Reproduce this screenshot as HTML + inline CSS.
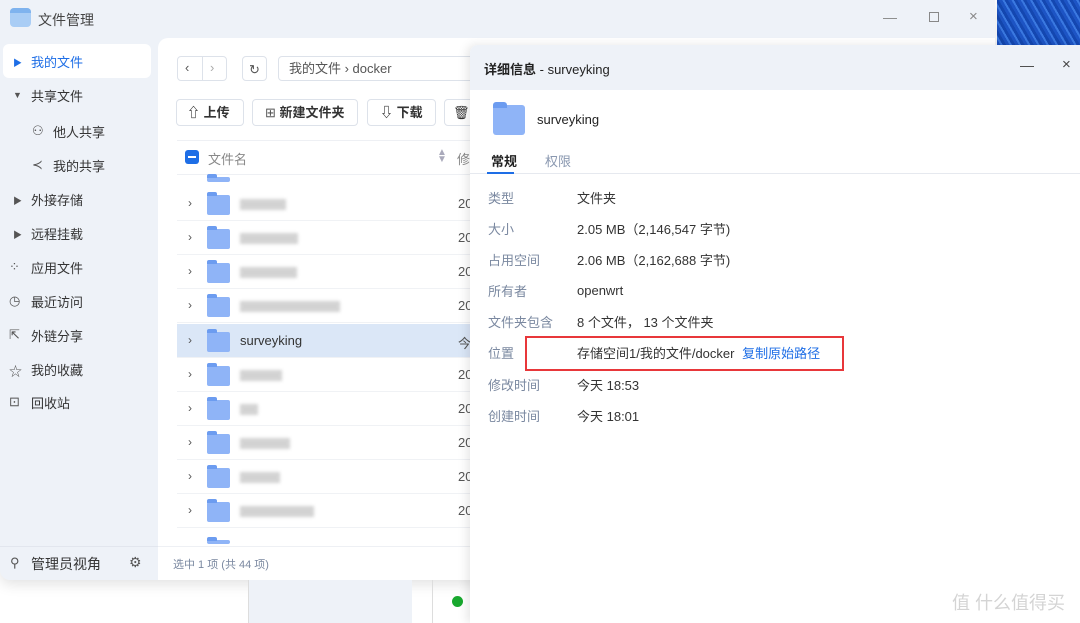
<!DOCTYPE html>
<html><head><meta charset="utf-8"><style>
*{margin:0;padding:0;box-sizing:border-box}
body{width:1080px;height:623px;overflow:hidden;background:#fff;position:relative;font-family:"Liberation Sans","Noto Sans CJK SC",sans-serif;font-size:13px;color:#333}
.a{position:absolute;white-space:nowrap}
.win{position:absolute;left:0;top:0;width:995px;height:580px;background:#eef2f8;border-radius:0 0 10px 10px;box-shadow:0 4px 14px rgba(0,0,0,.12)}
.side{color:#333;font-size:13px}
.ic{color:#555;font-size:13px}
.content{position:absolute;left:158px;top:38px;width:837px;height:542px;background:#fff;border-radius:10px 0 0 0}
.btn{position:absolute;border:1px solid #dde2ea;border-radius:4px;background:#fff;height:27px;font-size:13px;font-weight:bold;color:#333;line-height:25px}
.row{position:absolute;left:177px;width:293px;height:34px;border-bottom:1px solid #f0f2f5}
.fold{position:absolute;width:23px;height:20px;background:#8fb4f7;border-radius:2px}
.fold:before{content:"";position:absolute;left:0;top:-3px;width:10px;height:4px;background:#6c9cf0;border-radius:2px 2px 0 0}
.blur{position:absolute;height:11px;background:#c8c8c8;filter:blur(1.5px);opacity:.8}
.chev{position:absolute;left:11px;top:9px;color:#555;font-size:12px}
.dlg{position:absolute;left:470px;top:45px;width:610px;height:578px;background:#fff;box-shadow:-3px 0 10px rgba(0,0,0,.1);border-radius:8px 0 0 0;overflow:hidden}
.lab{position:absolute;left:18px;color:#7a88a0;font-size:13px}
.val{position:absolute;left:107px;color:#333;font-size:13px}
</style></head><body>
<div class="a" style="left:997px;top:0;width:83px;height:45px;background:repeating-linear-gradient(60deg,#1d54c4 0 3px,#3a78e0 3px 5px,#1447b0 5px 8px)"></div>
<div class="win">
 <div class="a" style="left:10px;top:8px;width:21px;height:19px;background:#a9cdf5;border-radius:4px"></div>
 <div class="a" style="left:10px;top:8px;width:21px;height:5px;background:#7fb3ee;border-radius:4px 4px 0 0"></div>
 <div class="a" style="left:38px;top:10px;font-size:14px;color:#444">文件管理</div>
 <div class="a" style="left:883px;top:9px;color:#888;font-size:14px">—</div>
 <div class="a" style="left:929px;top:12px;width:10px;height:10px;border:1px solid #888"></div>
 <div class="a" style="left:969px;top:8px;color:#888;font-size:15px">×</div>
 <div class="a" style="left:3px;top:44px;width:148px;height:34px;background:#fff;border-radius:6px"></div>
 <div class="a" style="left:13px;top:56px;font-size:9px;color:#1e6ee6">▶</div>
 <div class="a side" style="left:31px;top:52px;color:#1e6ee6">我的文件</div>
 <div class="a" style="left:13px;top:90px;font-size:9px;color:#555">▼</div>
 <div class="a side" style="left:31px;top:86px">共享文件</div>
 <div class="a ic" style="left:32px;top:123px">⚇</div>
 <div class="a side" style="left:53px;top:122px">他人共享</div>
 <div class="a ic" style="left:32px;top:157px">≺</div>
 <div class="a side" style="left:53px;top:156px">我的共享</div>
 <div class="a" style="left:13px;top:194px;font-size:9px;color:#555">▶</div>
 <div class="a side" style="left:31px;top:190px">外接存储</div>
 <div class="a" style="left:13px;top:228px;font-size:9px;color:#555">▶</div>
 <div class="a side" style="left:31px;top:224px">远程挂载</div>
 <div class="a ic" style="left:9px;top:259px">⁘</div>
 <div class="a side" style="left:31px;top:258px">应用文件</div>
 <div class="a ic" style="left:9px;top:293px">◷</div>
 <div class="a side" style="left:31px;top:292px">最近访问</div>
 <div class="a ic" style="left:9px;top:327px">⇱</div>
 <div class="a side" style="left:31px;top:326px">外链分享</div>
 <div class="a ic" style="left:9px;top:361px">☆</div>
 <div class="a side" style="left:31px;top:360px">我的收藏</div>
 <div class="a ic" style="left:9px;top:394px">⊡</div>
 <div class="a side" style="left:31px;top:393px">回收站</div>
 <div class="a" style="left:0;top:546px;width:158px;border-top:1px solid #e2e6ee"></div>
 <div class="a ic" style="left:10px;top:555px">⚲</div>
 <div class="a side" style="left:31px;top:554px;font-size:14px">管理员视角</div>
 <div class="a ic" style="left:129px;top:554px;font-size:14px">⚙</div>
 <div class="content">
  <div class="btn" style="left:19px;top:18px;width:50px;height:25px"></div>
  <div class="a" style="left:44px;top:18px;height:25px;border-left:1px solid #dde2ea"></div>
  <div class="a" style="left:27px;top:22px;color:#555">‹</div>
  <div class="a" style="left:52px;top:22px;color:#aaa">›</div>
  <div class="btn" style="left:84px;top:18px;width:25px;height:25px;text-align:center;font-weight:normal;color:#555">↻</div>
  <div class="btn" style="left:120px;top:18px;width:200px;height:25px;font-weight:normal;padding-left:10px;line-height:23px;color:#555">我的文件 › docker</div>
  <div class="btn" style="left:18px;top:61px;width:68px;padding-left:10px">⇧ 上传</div>
  <div class="btn" style="left:94px;top:61px;width:106px;padding-left:12px"><span style="font-weight:normal;color:#555">⊞</span> 新建文件夹</div>
  <div class="btn" style="left:209px;top:61px;width:69px;padding-left:12px">⇩ 下载</div>
  <div class="btn" style="left:286px;top:61px;width:30px;padding-left:8px;font-weight:normal">🗑</div>
  <div class="a" style="left:19px;top:102px;width:293px;border-top:1px solid #eef0f4"></div>
  <div class="a" style="left:27px;top:112px;width:14px;height:14px;background:#1e6ee6;border-radius:3px"></div>
  <div class="a" style="left:30px;top:118px;width:8px;height:2px;background:#fff"></div>
  <div class="a" style="left:50px;top:111px;color:#888">文件名</div>
  <div class="a" style="left:279px;top:111px;color:#aab;font-size:10px;line-height:7px">▲<br>▼</div>
  <div class="a" style="left:299px;top:111px;color:#888">修</div>
  <div class="a" style="left:19px;top:136px;width:293px;border-top:1px solid #eef0f4"></div>
 </div>
 <div class="fold" style="left:207px;top:177px;height:5px"></div>
 <div class="row" style="top:187px"><span class="chev">›</span><div class="fold" style="left:30px;top:8px"></div><div class="blur" style="left:63px;top:12px;width:46px"></div><span class="a" style="left:281px;top:9px;color:#555">20</span></div>
 <div class="row" style="top:221px"><span class="chev">›</span><div class="fold" style="left:30px;top:8px"></div><div class="blur" style="left:63px;top:12px;width:58px"></div><span class="a" style="left:281px;top:9px;color:#555">20</span></div>
 <div class="row" style="top:255px"><span class="chev">›</span><div class="fold" style="left:30px;top:8px"></div><div class="blur" style="left:63px;top:12px;width:57px"></div><span class="a" style="left:281px;top:9px;color:#555">20</span></div>
 <div class="row" style="top:289px"><span class="chev">›</span><div class="fold" style="left:30px;top:8px"></div><div class="blur" style="left:63px;top:12px;width:100px"></div><span class="a" style="left:281px;top:9px;color:#555">20</span></div>
 <div class="row" style="top:324px;background:#dbe7f7"><span class="chev">›</span><div class="fold" style="left:30px;top:8px"></div><span class="a" style="left:63px;top:9px;color:#333">surveyking</span><span class="a" style="left:281px;top:9px;color:#555">今</span></div>
 <div class="row" style="top:358px"><span class="chev">›</span><div class="fold" style="left:30px;top:8px"></div><div class="blur" style="left:63px;top:12px;width:42px"></div><span class="a" style="left:281px;top:9px;color:#555">20</span></div>
 <div class="row" style="top:392px"><span class="chev">›</span><div class="fold" style="left:30px;top:8px"></div><div class="blur" style="left:63px;top:12px;width:18px"></div><span class="a" style="left:281px;top:9px;color:#555">20</span></div>
 <div class="row" style="top:426px"><span class="chev">›</span><div class="fold" style="left:30px;top:8px"></div><div class="blur" style="left:63px;top:12px;width:50px"></div><span class="a" style="left:281px;top:9px;color:#555">20</span></div>
 <div class="row" style="top:460px"><span class="chev">›</span><div class="fold" style="left:30px;top:8px"></div><div class="blur" style="left:63px;top:12px;width:40px"></div><span class="a" style="left:281px;top:9px;color:#555">20</span></div>
 <div class="row" style="top:494px"><span class="chev">›</span><div class="fold" style="left:30px;top:8px"></div><div class="blur" style="left:63px;top:12px;width:74px"></div><span class="a" style="left:281px;top:9px;color:#555">20</span></div>
 <div class="fold" style="left:207px;top:540px;height:4px"></div>
 <div class="a" style="left:158px;top:546px;width:320px;border-top:1px solid #eef0f4"></div>
 <div class="a" style="left:173px;top:556px;color:#7a88a0;font-size:11px">选中 1 项 (共 44 项)</div>
</div>
<div class="a" style="left:248px;top:580px;width:164px;height:43px;background:#eef2f8;border-left:1px solid #ddd"></div>
<div class="a" style="left:432px;top:580px;height:43px;border-left:1px solid #ddd"></div>
<div class="a" style="left:452px;top:596px;width:11px;height:11px;border-radius:50%;background:#18a82e"></div>
<div class="dlg">
 <div class="a" style="left:0;top:0;width:610px;height:45px;background:#eef2f8"></div>
 <div class="a" style="left:14px;top:14px;font-size:13px;color:#222"><b>详细信息</b> - surveyking</div>
 <div class="a" style="left:550px;top:12px;color:#444;font-size:14px">—</div>
 <div class="a" style="left:592px;top:11px;color:#444;font-size:15px">×</div>
 <div class="a" style="left:23px;top:60px;width:32px;height:30px;background:#8fb4f7;border-radius:3px"></div>
 <div class="a" style="left:23px;top:57px;width:14px;height:6px;background:#6c9cf0;border-radius:3px 3px 0 0"></div>
 <div class="a" style="left:67px;top:67px;font-size:13px;color:#222">surveyking</div>
 <div class="a" style="left:21px;top:106px;font-weight:bold;color:#222">常规</div>
 <div class="a" style="left:75px;top:106px;color:#8a98b0">权限</div>
 <div class="a" style="left:0;top:128px;width:610px;border-top:1px solid #e6e9ef"></div>
 <div class="a" style="left:17px;top:127px;width:27px;height:2px;background:#1e6ee6"></div>
 <div class="lab" style="top:143px">类型</div><div class="val" style="top:143px">文件夹</div>
 <div class="lab" style="top:174px">大小</div><div class="val" style="top:174px">2.05 MB（2,146,547 字节)</div>
 <div class="lab" style="top:205px">占用空间</div><div class="val" style="top:205px">2.06 MB（2,162,688 字节)</div>
 <div class="lab" style="top:236px">所有者</div><div class="val" style="top:238px">openwrt</div>
 <div class="lab" style="top:267px">文件夹包含</div><div class="val" style="top:267px">8 个文件， 13 个文件夹</div>
 <div class="lab" style="top:298px">位置</div><div class="val" style="top:298px">存储空间1/我的文件/docker <span style="color:#1e6ee6;margin-left:4px">复制原始路径</span></div>
 <div class="a" style="left:55px;top:291px;width:319px;height:35px;border:2px solid #e8373a"></div>
 <div class="lab" style="top:330px">修改时间</div><div class="val" style="top:330px">今天 18:53</div>
 <div class="lab" style="top:361px">创建时间</div><div class="val" style="top:361px">今天 18:01</div>
 <div class="a" style="left:482px;top:544px;color:#d4d4d4;font-size:18px">值 什么值得买</div>
</div>
</body></html>
